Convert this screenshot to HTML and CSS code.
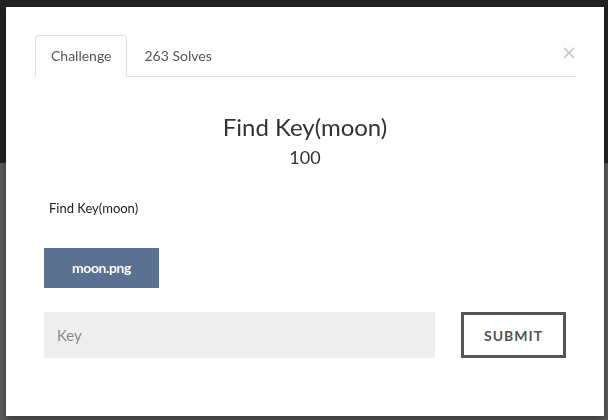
FILE: index.html
```html
<!DOCTYPE html>
<html>
<head>
<meta charset="utf-8">
<link rel="stylesheet" href="styles.css">
</head>
<body>
<div class="page">
  <div class="page-top"></div>
  <div class="page-bottom"></div>
</div>
<div class="modal">
  <button class="close" type="button">×</button>
  <ul class="tabs">
    <li class="tab active">Challenge</li>
    <li class="tab">263 Solves</li>
  </ul>
  <div class="content">
    <h3 class="title">Find Key(moon)</h3>
    <div class="value">100</div>
    <p class="desc">Find Key(moon)</p>
    <div class="files"><a class="file" href="#">moon.png</a></div>
    <div class="answer">
      <input class="key" type="text" placeholder="Key">
      <button class="submit" type="button">SUBMIT</button>
    </div>
  </div>
</div>
</body>
</html>
```
FILE: styles.css
```css
html, body {
  margin: 0;
  padding: 0;
  height: 100%;
}
body {
  font-family: Lato, "Open Sans", sans-serif;
  color: #333;
  overflow: hidden;
}
.page {
  display: flex;
  flex-direction: column;
  height: 100%;
}
.page-top {
  height: 163px;
  background: #222222;
}
.page-bottom {
  flex: 1;
  background: #5b5b5b;
}
.modal {
  position: fixed;
  left: 6px;
  top: 7px;
  width: 598px;
  height: 409px;
  box-sizing: border-box;
  background: #fff;
  padding: 28px 28px 0 29px;
  box-shadow: 0 3px 8px rgba(0,0,0,0.4);
}
.close {
  position: absolute;
  right: 27px;
  top: 33px;
  border: 0;
  background: none;
  padding: 0;
  font-family: "DejaVu Sans", sans-serif;
  font-size: 19px;
  line-height: 24px;
  color: #c8c8c8;
  cursor: pointer;
}
.tabs {
  list-style: none;
  margin: 0;
  padding: 0;
  display: flex;
  border-bottom: 1px solid #ddd;
}
.tab {
  font-size: 14px;
  line-height: 20px;
  padding: 10px 14px 10px 15px;
  margin-right: 2px;
  margin-bottom: -1px;
  color: #555;
  border: 1px solid transparent;
  border-radius: 4px 4px 0 0;
}
.tab.active {
  border-color: #ddd;
  border-bottom-color: #fff;
  background: #fff;
}
.content {
  padding: 0 10px 0 9px;
}
.title {
  margin: 36px 0 0;
  text-align: center;
  font-weight: 400;
  font-size: 24px;
  line-height: 28px;
  color: #333;
}
.value {
  margin-top: 5px;
  text-align: center;
  font-size: 18px;
  line-height: 22px;
  color: #333;
}
.desc {
  margin: 31px 0 0 5px;
  font-size: 13px;
  line-height: 18px;
  color: #222;
}
.files {
  margin-top: 31px;
  display: flex;
}
.file {
  display: block;
  width: 115px;
  height: 40px;
  line-height: 40px;
  text-align: center;
  background: #5b7190;
  color: #fff;
  font-weight: 700;
  font-size: 14px;
  text-decoration: none;
  letter-spacing: -0.4px;
}
.answer {
  margin-top: 24px;
  display: flex;
  align-items: stretch;
}
.key {
  width: 391px;
  height: 46px;
  box-sizing: border-box;
  border: 0;
  background: #eeeeee;
  padding: 0 13px;
  font-family: Lato, sans-serif;
  font-size: 15px;
  color: #555;
  outline: none;
}
.key::placeholder {
  color: #888;
}
.submit {
  margin-left: 26px;
  width: 105px;
  height: 46px;
  box-sizing: border-box;
  border: 3px solid #555;
  background: #fff;
  font-family: Lato, sans-serif;
  font-weight: 700;
  font-size: 14px;
  letter-spacing: 1px;
  color: #555;
  padding: 0;
  cursor: pointer;
}
```
